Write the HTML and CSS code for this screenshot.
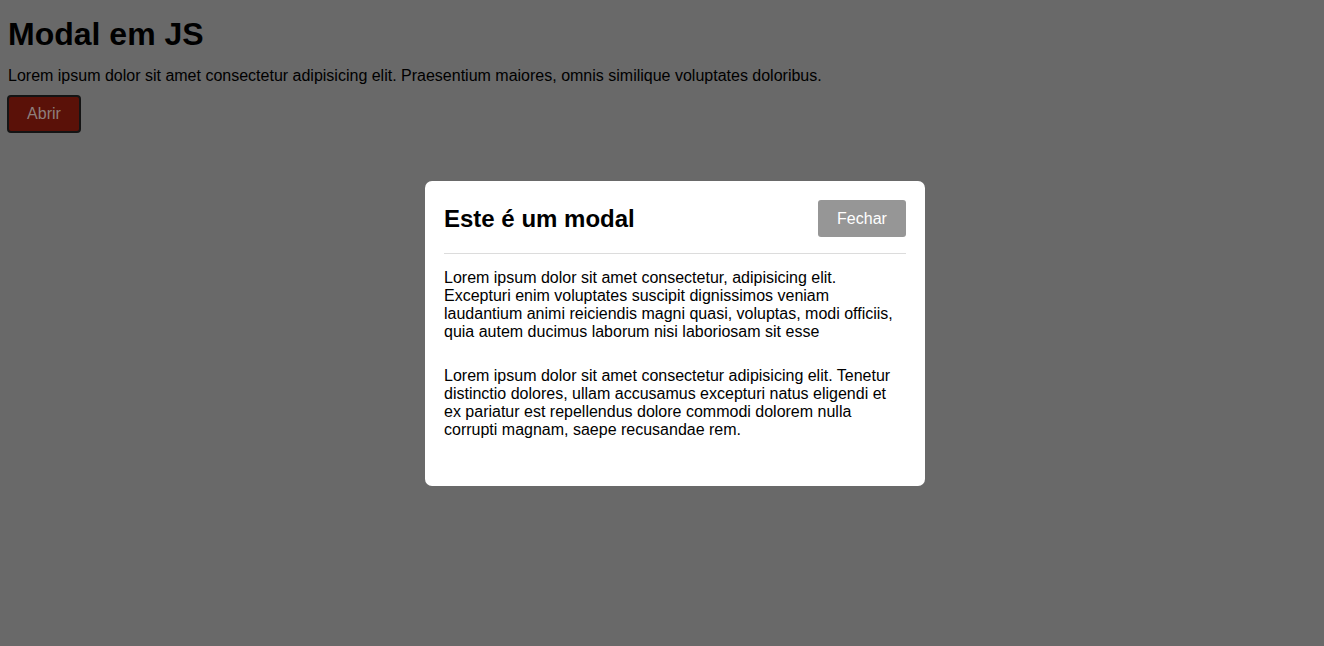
FILE: index.html
```html
<!DOCTYPE html>
<html lang="pt">
<head>
<meta charset="utf-8">
<title>Modal em JS</title>
<link rel="stylesheet" href="styles.css">
</head>
<body>
<main class="page">
  <h1 class="page-title">Modal em JS</h1>
  <p class="page-text">Lorem ipsum dolor sit amet consectetur adipisicing elit. Praesentium maiores, omnis similique voluptates doloribus.</p>
  <button class="btn-open">Abrir</button>
</main>
<div class="overlay">
  <div class="modal">
    <div class="modal-header">
      <h2 class="modal-title">Este é um modal</h2>
      <button class="btn-close">Fechar</button>
    </div>
    <div class="modal-body">
      <p class="modal-p">Lorem ipsum dolor sit amet consectetur, adipisicing elit. Excepturi enim voluptates suscipit dignissimos veniam laudantium animi reiciendis magni quasi, voluptas, modi officiis, quia autem ducimus laborum nisi laboriosam sit esse</p>
      <p class="modal-p">Lorem ipsum dolor sit amet consectetur adipisicing elit. Tenetur distinctio dolores, ullam accusamus excepturi natus eligendi et ex pariatur est repellendus dolore commodi dolorem nulla corrupti magnam, saepe recusandae rem.</p>
    </div>
  </div>
</div>
</body>
</html>
```
FILE: styles.css
```css
* { box-sizing: border-box; }
html, body { height: 100%; }
body {
  margin: 0;
  padding: 8px;
  background: #696969;
  font-family: "Liberation Sans", Arial, sans-serif;
  color: #000;
}
.page-title {
  margin: 8px 0 0;
  font-size: 32px;
  line-height: 37px;
  font-weight: bold;
}
.page-text {
  margin: 14px 0 10px;
  font-size: 16px;
  line-height: 18px;
}
.btn-open {
  display: block;
  margin: 0 0 0 -1px;
  width: 74px;
  height: 38px;
  border: 2px solid #141414;
  border-radius: 4px;
  background: #5a1108;
  color: #8e7f7c;
  font-family: inherit;
  font-size: 16px;
}
.overlay {
  position: fixed;
  inset: 0;
  display: flex;
  align-items: flex-start;
  justify-content: flex-start;
  padding: 181px 0 0 425px;
}
.modal {
  width: 500px;
  background: #fff;
  border-radius: 7px;
  padding: 19px 19px 47px 19px;
}
.modal-header {
  display: flex;
  align-items: center;
  justify-content: space-between;
  padding-bottom: 16px;
  border-bottom: 1px solid #dcdcdc;
}
.modal-title {
  margin: 0;
  font-size: 24px;
  font-weight: bold;
}
.btn-close {
  width: 88px;
  height: 37px;
  border: none;
  border-radius: 3px;
  background: #969696;
  color: #fff;
  font-family: inherit;
  font-size: 16px;
}
.modal-body { padding-top: 15px; }
.modal-p {
  margin: 0;
  font-size: 16px;
  line-height: 18px;
}
.modal-p + .modal-p { margin-top: 26px; }
```
